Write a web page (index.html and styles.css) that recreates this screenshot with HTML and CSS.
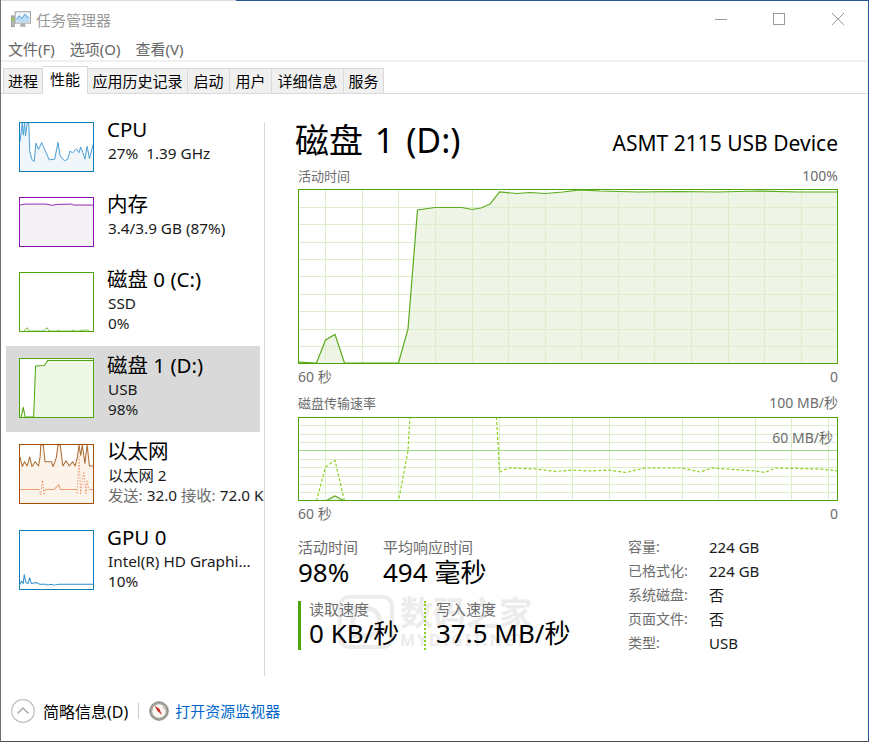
FILE: index.html
```html
<!DOCTYPE html>
<html lang="zh-CN">
<head>
    <meta charset="UTF-8">
    <title>任务管理器</title>
    <link rel="stylesheet" href="styles.css">
</head>
<body>
    <div class="window">
        <!-- Title bar -->
        <div class="titlebar">
            <svg class="app-icon" viewBox="0 0 22 18">
                <rect x="0.5" y="5" width="3" height="12" fill="#b8b8b8" stroke="#777" stroke-width="0.6"/>
                <rect x="1" y="7" width="2" height="3" fill="#7ed321"/>
                <rect x="4.5" y="0.5" width="17" height="12.5" fill="#eef4fa" stroke="#9a9a9a"/>
                <path d="M6 9 L9 5 L12 8 L15 3.5 L20 7.5 V12 H6 Z" fill="#bcdcf4"/>
                <path d="M6 9 L9 5 L12 8 L15 3.5 L20 7.5" fill="none" stroke="#3a8fd0" stroke-width="1"/>
                <path d="M11 13 H15 L16.5 17 H9.5 Z" fill="#b0b0b0"/>
            </svg>
            <span class="app-title">任务管理器</span>
            <div class="win-controls">
                <svg viewBox="0 0 12 12" class="ctl ctl-min"><path d="M0 6.5 H12" stroke="#999" stroke-width="1"/></svg>
                <svg viewBox="0 0 12 12" class="ctl ctl-max"><rect x="0.5" y="0.5" width="11" height="11" fill="none" stroke="#999"/></svg>
                <svg viewBox="0 0 12 12" class="ctl ctl-close"><path d="M0 0 L12 12 M12 0 L0 12" stroke="#999" stroke-width="1"/></svg>
            </div>
        </div>

        <!-- Menu -->
        <div class="menu">
            <span>文件(F)</span>
            <span>选项(O)</span>
            <span>查看(V)</span>
        </div>

        <!-- Tabs -->
        <div class="tabs">
            <div class="tab tab-w40">进程</div>
            <div class="tab active">性能</div>
            <div class="tab tab-w100">应用历史记录</div>
            <div class="tab tab-w42">启动</div>
            <div class="tab tab-w42">用户</div>
            <div class="tab tab-w72">详细信息</div>
            <div class="tab tab-w40">服务</div>
        </div>

        <div class="content">
            <!-- Left list -->
            <div class="sidebar">
                <div class="item item-first">
                    <svg class="thumb thumb-short cpu" viewBox="0 0 225 150" preserveAspectRatio="none">
                        <path class="fill" d="M0 58 L7 0 L10 38 L14 0 L17 41 L22 0 L27 0 L30 88 L37 115 L44 120 L49 63 L57 83 L67 61 L77 85 L90 115 L107 113 L117 61 L124 103 L137 118 L147 113 L154 88 L162 93 L174 81 L182 93 L187 75 L194 93 L200 113 L207 73 L214 111 L225 68 V150 H0 Z"/>
                        <path class="line" d="M0 58 L7 0 L10 38 L14 0 L17 41 L22 0 L27 0 L30 88 L37 115 L44 120 L49 63 L57 83 L67 61 L77 85 L90 115 L107 113 L117 61 L124 103 L137 118 L147 113 L154 88 L162 93 L174 81 L182 93 L187 75 L194 93 L200 113 L207 73 L214 111 L225 68"/>
                    </svg>
                    <div class="info">
                        <div class="name">CPU</div>
                        <div class="sub">27%&nbsp; 1.39 GHz</div>
                    </div>
                </div>
                <div class="item">
                    <svg class="thumb thumb-short mem" viewBox="0 0 225 150" preserveAspectRatio="none">
                        <path class="fill" d="M0 22 L15 19 L80 19 L100 23 L115 20 L160 19 L165 22 H225 V150 H0 Z"/>
                        <path class="line" d="M0 22 L15 19 L80 19 L100 23 L115 20 L160 19 L165 22 H225"/>
                    </svg>
                    <div class="info">
                        <div class="name">内存</div>
                        <div class="sub">3.4/3.9 GB (87%)</div>
                    </div>
                </div>
                <div class="item item-tall">
                    <svg class="thumb disk" viewBox="0 0 225 180" preserveAspectRatio="none">
                        <path class="line-soft" d="M12 180 L22 170 L28 180 H72 L83 170 L90 180 H115 L118 177 L122 180 H160 L164 177 L168 180 H185 L190 177 L195 180 L200 177 L208 177 L214 180"/>
                    </svg>
                    <div class="info">
                        <div class="name">磁盘 0 (C:)</div>
                        <div class="sub">SSD</div>
                        <div class="sub">0%</div>
                    </div>
                </div>
                <div class="item item-tall selected">
                    <svg class="thumb disk" viewBox="0 0 225 180" preserveAspectRatio="none">
                        <path class="fill" d="M3 180 L10 150 L16 180 H42 L48 22 L75 20 L85 5 H225 V180 Z"/>
                        <path class="line" d="M3 180 L10 150 L16 180 H42 L48 22 L75 20 L85 5 H225"/>
                    </svg>
                    <div class="info">
                        <div class="name">磁盘 1 (D:)</div>
                        <div class="sub">USB</div>
                        <div class="sub">98%</div>
                    </div>
                </div>
                <div class="item item-tall">
                    <svg class="thumb eth" viewBox="0 0 225 180" preserveAspectRatio="none">
                        <path class="fill" d="M0 37 L7 67 L14 52 L22 65 L30 37 L37 67 L47 52 L57 65 L62 37 L64 0 L72 0 L77 52 L97 52 L102 67 L112 39 L117 0 L124 0 L132 65 L142 49 L152 65 L162 52 L170 65 L177 37 L182 0 L187 32 L192 0 L200 57 L207 0 L214 65 H225 V180 H0 Z"/>
                        <path class="line" d="M0 37 L7 67 L14 52 L22 65 L30 37 L37 67 L47 52 L57 65 L62 37 L64 0 L72 0 L77 52 L97 52 L102 67 L112 39 L117 0 L124 0 L132 65 L142 49 L152 65 L162 52 L170 65 L177 37 L182 0 L187 32 L192 0 L200 57 L207 0 L214 65 H225"/>
                        <path class="line-light" d="M0 138 H58 M78 138 H105 L120 124 L124 138 H176 M212 138 H225"/>
                        <path class="line-dots" d="M58 138 L64 155 L69 110 L74 155 L78 138 M176 150 L182 37 L187 150 L197 82 L203 150 L207 112 L212 138"/>
                    </svg>
                    <div class="info">
                        <div class="name">以太网</div>
                        <div class="sub">以太网 2</div>
                        <div class="sub sub-clip"><span class="gray">发送:</span> 32.0 <span class="gray">接收:</span> 72.0 Kbps</div>
                    </div>
                </div>
                <div class="item item-tall">
                    <svg class="thumb gpu" viewBox="0 0 225 180" preserveAspectRatio="none">
                        <path class="line-soft" d="M0 165 L5 155 L10 163 L13 135 L18 160 L25 163 L30 145 L35 163 L50 160 L60 165 H80 L85 168 L95 165 L105 168 L120 165 H225"/>
                    </svg>
                    <div class="info">
                        <div class="name">GPU 0</div>
                        <div class="sub">Intel(R) HD Graphi...</div>
                        <div class="sub">10%</div>
                    </div>
                </div>
            </div>

            <!-- Detail panel -->
            <div class="main">
                <div class="head">
                    <div class="head-title">磁盘 1 (D:)</div>
                    <div class="head-device">ASMT 2115 USB Device</div>
                </div>

                <div class="chart-label chart-label-top">
                    <span>活动时间</span>
                    <span class="latin">100%</span>
                </div>
                <svg class="chart chart-active" viewBox="1 1 538 173">
                    <path class="area" d="M0 173 L18.5 174 L27.5 151 L37 145.5 L46.5 174 H100.5 L110 140 L119.5 21 L137 18.5 H164 L174 20.5 L183 19 L192 15 L201.5 3 L219 4.5 L232 3.5 L247 4.5 L265 3 L282 1 L302 2 L340 3 L380 2.5 L420 3 L460 2 L500 3 L540 3 V174 H0 Z"/>
                    <path class="grid" d="M27.5 0V174 M64.5 0V174 M100.5 0V174 M137.5 0V174 M174.5 0V174 M210.5 0V174 M247.5 0V174 M283.5 0V174 M320.5 0V174 M356.5 0V174 M393.5 0V174 M430.5 0V174 M466.5 0V174 M503.5 0V174 M0 18.5H540 M0 35.5H540 M0 53.5H540 M0 70.5H540 M0 87.5H540 M0 105.5H540 M0 122.5H540 M0 140.5H540 M0 157.5H540"/>
                    <path class="trace" d="M0 173 L18.5 174 L27.5 151 L37 145.5 L46.5 174 H100.5 L110 140 L119.5 21 L137 18.5 H164 L174 20.5 L183 19 L192 15 L201.5 3 L219 4.5 L232 3.5 L247 4.5 L265 3 L282 1 L302 2 L340 3 L380 2.5 L420 3 L460 2 L500 3 L540 3"/>
                </svg>
                <div class="chart-label chart-label-bottom">
                    <span class="latin">60 秒</span>
                    <span class="latin">0</span>
                </div>

                <div class="chart-label chart-label-top2">
                    <span>磁盘传输速率</span>
                    <span class="latin">100 MB/秒</span>
                </div>
                <div class="chart-wrap">
                    <svg class="chart chart-rate" viewBox="1 1 538 82">
                        <path class="grid" d="M27.5 0V84 M64.5 0V84 M100.5 0V84 M137.5 0V84 M174.5 0V84 M201.5 0V84 M238.5 0V84 M274.5 0V84 M311.5 0V84 M347.5 0V84 M384.5 0V84 M420.5 0V84 M457.5 0V84 M493.5 0V84 M530.5 0V84 M0 8.5H540 M0 17.5H540 M0 25.5H540 M0 42.5H540 M0 50.5H540 M0 59.5H540 M0 67.5H540 M0 75.5H540"/>
                        <path class="limit" d="M0 33.5H540"/>
                        <path class="area" d="M27.5 84 L37 79 L46.5 84 Z"/>
                        <path class="trace" d="M27.5 84 L37 79 L46.5 84"/>
                        <path class="trace dashed" d="M18.5 84 L27.5 50 L37 43.5 L46.5 84 H100.5 L110 34 L112 0 M198.5 0 L201.5 55 L210.5 51 L238 52 L258 54.5 L274 53 L292 54 L311 53 L328 55.5 L347 51 L384 51 L402 55 L414 51 L457 54 L467 55.5 L477 51 L522 52 L540 54"/>
                    </svg>
                    <span class="limit-label">60 MB/秒</span>
                </div>
                <div class="chart-label chart-label-bottom">
                    <span class="latin">60 秒</span>
                    <span class="latin">0</span>
                </div>

                <div class="stats">
                    <div class="stats-left">
                        <div class="stats-row">
                            <div class="stat stat-active">
                                <div class="stat-label">活动时间</div>
                                <div class="stat-value">98%</div>
                            </div>
                            <div class="stat">
                                <div class="stat-label">平均响应时间</div>
                                <div class="stat-value">494 毫秒</div>
                            </div>
                        </div>
                        <div class="stats-row stats-row-speed">
                            <div class="stat stat-read">
                                <div class="stat-label">读取速度</div>
                                <div class="stat-value">0 KB/秒</div>
                            </div>
                            <div class="stat stat-write">
                                <div class="stat-label">写入速度</div>
                                <div class="stat-value">37.5 MB/秒</div>
                            </div>
                        </div>
                    </div>
                    <div class="props">
                        <span class="prop-key">容量:</span><span>224 GB</span>
                        <span class="prop-key">已格式化:</span><span>224 GB</span>
                        <span class="prop-key">系统磁盘:</span><span>否</span>
                        <span class="prop-key">页面文件:</span><span>否</span>
                        <span class="prop-key">类型:</span><span>USB</span>
                    </div>
                    <!-- Faint site watermark over the picture -->
                    <div class="watermark">
                        <svg class="wm-logo" viewBox="0 0 56 54">
                            <rect x="2" y="2" width="52" height="50" rx="9" fill="none" stroke="currentColor" stroke-width="4"/>
                            <path d="M15 13 H28 A14 14 0 0 1 28 41 H15 Z" fill="none" stroke="currentColor" stroke-width="5"/>
                        </svg>
                        <div>
                            <div class="wm-cn">数码之家</div>
                            <div class="wm-en">MYDIGIT.NET</div>
                        </div>
                    </div>
                </div>
            </div>
        </div>

        <!-- Footer -->
        <div class="footer">
            <svg class="collapse" viewBox="0 0 24 24">
                <circle cx="12" cy="12" r="11.3" fill="#fff" stroke="#bdbdbd" stroke-width="1.2"/>
                <path d="M6.5 14.5 L12 9 L17.5 14.5" fill="none" stroke="#aaa" stroke-width="1.5"/>
            </svg>
            <span class="footer-text">简略信息(D)</span>
            <span class="footer-sep"></span>
            <svg class="gauge" viewBox="0 0 20 20">
                <circle cx="10" cy="10" r="9.3" fill="#a5a59d" stroke="#77776f" stroke-width="0.8"/>
                <circle cx="10" cy="10" r="6.8" fill="#fbf9f3"/>
                <path d="M5.5 4.5 L10.5 8 L13 14 L8.5 10 Z" fill="#c8281e"/>
                <path d="M14 5.5 L15.5 8.5" stroke="#d8a080" stroke-width="1"/>
            </svg>
            <span class="footer-link">打开资源监视器</span>
        </div>
    </div>
</body>
</html>
```

FILE: styles.css
```css
/* Page */
html, body {
    margin: 0;
    padding: 0;
}

body {
    width: 869px;
    height: 742px;
    overflow: hidden;
    background: #ffffff;
    font-family: "Noto Sans", "Noto Sans CJK SC", sans-serif;
    color: #000000;
}

.window {
    box-sizing: border-box;
    width: 869px;
    height: 742px;
    display: flex;
    flex-direction: column;
    border-left: 1px solid #6f6f6f;
    border-right: 1px solid #2b579a;
    border-bottom: 1px solid #4a4a4a;
}

/* Title bar */
.titlebar {
    box-sizing: border-box;
    height: 38px;
    display: flex;
    align-items: center;
    padding-left: 10px;
    background: linear-gradient(to right, #dcdcdc 235px, #2b579a 235px) top / 100% 1px no-repeat;
    flex-shrink: 0;
}

.app-icon {
    width: 20px;
    height: 17px;
    margin-right: 5px;
}

.app-title {
    font-size: 15px;
    color: #999999;
}

.win-controls {
    margin-left: auto;
    display: flex;
    align-items: center;
}

.ctl {
    width: 12px;
    height: 12px;
}

.ctl-min {
    margin-right: 46px;
}

.ctl-max {
    margin-right: 47px;
}

.ctl-close {
    margin-right: 24px;
}

/* Menu */
.menu {
    box-sizing: border-box;
    height: 24px;
    display: flex;
    align-items: center;
    gap: 15px;
    padding-left: 7px;
    padding-bottom: 1px;
    font-size: 15px;
    color: #666666;
    border-bottom: 2px solid #f0f0f0;
    flex-shrink: 0;
}

/* Tabs */
.tabs {
    height: 32px;
    display: flex;
    align-items: flex-end;
    padding-left: 2px;
    border-bottom: 1px solid #d9d9d9;
    box-sizing: border-box;
    flex-shrink: 0;
}

.tab {
    box-sizing: border-box;
    height: 26px;
    margin-bottom: -1px;
    border: 1px solid #d9d9d9;
    border-left: none;
    background: #f0f0f0;
    font-size: 15px;
    line-height: 24px;
    text-align: center;
    white-space: nowrap;
}

.tab:first-child {
    border-left: 1px solid #d9d9d9;
}

.tab-w40 {
    width: 40px;
}

.tab-w42 {
    width: 42px;
}

.tab-w72 {
    width: 72px;
}

.tab-w100 {
    width: 100px;
}

.tab.active {
    width: 45px;
    height: 28px;
    background: #ffffff;
    border-bottom: none;
    line-height: 24px;
}

/* Content split */
.content {
    height: 582px;
    display: flex;
    padding-top: 28px;
    box-sizing: border-box;
    flex-shrink: 0;
}

.sidebar {
    box-sizing: border-box;
    width: 264px;
    height: 554px;
    border-right: 1px solid #d9d9d9;
    flex-shrink: 0;
}

.item {
    width: 254px;
    height: 75px;
    margin-left: 5px;
    padding: 12px 0 0 13px;
    box-sizing: border-box;
    display: flex;
    gap: 13px;
}

.item-first {
    height: 63px;
    padding-top: 0;
}

.item-tall {
    height: 86px;
}

.item.selected {
    background: #d9d9d9;
}

.thumb {
    box-sizing: border-box;
    width: 75px;
    height: 60px;
    flex-shrink: 0;
    border: 1px solid;
    background: #ffffff;
}

.thumb-short {
    height: 50px;
}

.thumb path {
    vector-effect: non-scaling-stroke;
    stroke-linejoin: round;
}

.thumb .line,
.thumb .line-soft,
.thumb .line-light,
.thumb .line-dots {
    fill: none;
    stroke-width: 1;
}

.thumb .fill {
    stroke: none;
}

.cpu,
.gpu {
    border-color: #117dbb;
}

.cpu .fill {
    fill: #f1f6fa;
}

.cpu .line {
    stroke: #4a9fd4;
}

.gpu .line-soft {
    stroke: #2f8dc8;
}

.mem {
    border-color: #8b12ae;
}

.mem .fill {
    fill: #f4f2f4;
}

.mem .line {
    stroke: #9528b4;
}

.disk {
    border-color: #4da60c;
}

.disk .fill {
    fill: #eff7e6;
}

.disk .line {
    stroke: #4da60c;
}

.disk .line-soft {
    stroke: #8cc860;
}

.eth {
    border-color: #a74f01;
}

.eth .fill {
    fill: #fcf3eb;
}

.eth .line {
    stroke: #a96a30;
}

.eth .line-light {
    stroke: #f0a070;
}

.eth .line-dots {
    stroke: #e0703a;
    stroke-dasharray: 1 2;
}

.info {
    white-space: nowrap;
    margin-top: -6px;
}

.name {
    font-size: 20.5px;
    line-height: 27px;
}

.sub {
    font-size: 15.3px;
    line-height: 20px;
    padding-left: 1px;
    color: #1a1a1a;
}

/* The rate line runs past the list's edge and is cut there */
.sub-clip {
    width: 156px;
    overflow: hidden;
}

.gray {
    color: #6d6d6d;
}

/* Detail panel */
.main {
    width: 540px;
    margin-left: 33px;
    flex-shrink: 0;
}

.head {
    height: 46px;
    display: flex;
    justify-content: space-between;
    align-items: flex-end;
    margin-top: -5px;
}

.head-title {
    font-size: 34px;
    line-height: 46px;
    margin-left: -3px;
    word-spacing: 3px;
    white-space: nowrap;
}

.head-device {
    font-size: 21px;
    line-height: 30px;
    padding-bottom: 5px;
    white-space: nowrap;
}

.chart-label {
    display: flex;
    justify-content: space-between;
    font-size: 13px;
    line-height: 18px;
    color: #6d6d6d;
}

.latin {
    font-size: 14px;
}

.chart-label-top {
    margin-top: 4px;
    height: 22px;
}

.chart-label-top2 {
    margin-top: 8px;
    height: 23px;
}

.chart-label-bottom {
    padding-top: 4px;
}

.chart {
    display: block;
    box-sizing: border-box;
    width: 540px;
    border: 1px solid #4da60c;
    background: #ffffff;
}

.chart-active {
    height: 175px;
}

.chart-rate {
    height: 84px;
}

.chart-wrap {
    position: relative;
}

.limit-label {
    position: absolute;
    right: 5px;
    top: 12px;
    font-size: 14px;
    line-height: 18px;
    color: #6d6d6d;
}

.grid {
    fill: none;
    stroke: #dcedcc;
    stroke-width: 1;
}

.area {
    fill: #eef5e6;
}

.trace {
    fill: none;
    stroke: #5cab1e;
    stroke-width: 1.2;
}

.dashed {
    stroke: #8cd121;
    stroke-dasharray: 3 2;
}

.limit {
    fill: none;
    stroke: #9ed98a;
    stroke-width: 1.2;
}

/* Stats under the charts */
.stats {
    position: relative;
    margin-top: 15px;
    display: flex;
    justify-content: space-between;
}

.stats-left {
    position: relative;
    z-index: 1;
}

.stats-row {
    display: flex;
}

.stats-row-speed {
    margin-top: 13px;
}

.stat {
    white-space: nowrap;
}

.stat-active {
    width: 85px;
}

.stat-label {
    font-size: 15px;
    line-height: 18px;
    color: #6d6d6d;
}

.stat-value {
    font-size: 26px;
    line-height: 32px;
}

.stat-read {
    box-sizing: border-box;
    width: 126px;
    height: 49px;
    padding-left: 8px;
    border-left: 3px solid #4da60c;
}

.stat-write {
    box-sizing: border-box;
    height: 49px;
    padding-left: 10px;
    border-left: 2px dotted #8cd121;
}

.stat-read .stat-label,
.stat-write .stat-label {
    line-height: 16px;
}

.props {
    position: relative;
    z-index: 1;
    display: grid;
    grid-template-columns: 81px 129px;
    grid-auto-rows: 24px;
    margin-top: -3px;
    height: 120px;
    font-size: 15px;
    line-height: 24px;
    color: #1a1a1a;
}

.prop-key {
    font-size: 14px;
    color: #6d6d6d;
}

.watermark {
    position: absolute;
    left: 40px;
    top: 57px;
    display: flex;
    gap: 6px;
    color: #ececec;
}

.wm-logo {
    width: 56px;
    height: 54px;
}

.wm-cn {
    font-size: 33px;
    line-height: 36px;
    font-weight: 700;
    white-space: nowrap;
}

.wm-en {
    font-size: 16px;
    line-height: 18px;
    letter-spacing: 2px;
    font-weight: 700;
    white-space: nowrap;
}

/* Footer */
.footer {
    flex: 1;
    display: flex;
    align-items: center;
    padding-left: 10px;
    padding-top: 4px;
}

.collapse {
    width: 24px;
    height: 24px;
}

.footer-text {
    margin-left: 8px;
    font-size: 16px;
}

.footer-sep {
    width: 1px;
    height: 16px;
    margin-left: 10px;
    background: #c8c8c8;
}

.gauge {
    width: 20px;
    height: 20px;
    margin-left: 10px;
}

.footer-link {
    margin-left: 6px;
    font-size: 15px;
    color: #0066cc;
}
```
